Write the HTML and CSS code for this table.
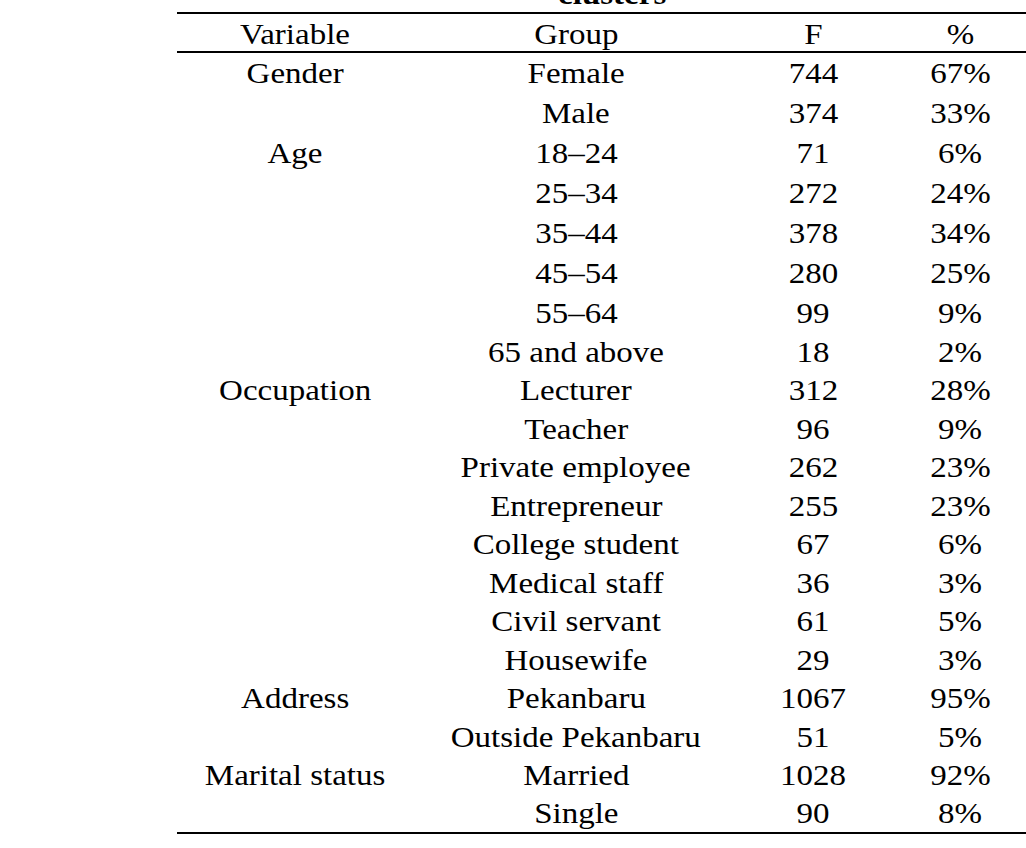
FILE: index.html
```html
<!DOCTYPE html>
<html lang="en">
<head>
<meta charset="utf-8">
<title>Demographics</title>
<link rel="stylesheet" href="styles.css">
</head>
<body>
<div class="page">
  <div class="caption"><span>clusters</span></div>
  <table class="demog">
    <colgroup>
      <col class="c-var"><col class="c-grp"><col class="c-f"><col class="c-pct">
    </colgroup>
    <thead>
      <tr><th><span>Variable</span></th><th><span>Group</span></th><th><span>F</span></th><th><span>%</span></th></tr>
    </thead>
    <tbody>
      <tr class="tall"><td><span>Gender</span></td><td><span>Female</span></td><td><span>744</span></td><td><span>67%</span></td></tr>
      <tr class="tall"><td></td><td><span>Male</span></td><td><span>374</span></td><td><span>33%</span></td></tr>
      <tr class="tall"><td><span>Age</span></td><td><span>18–24</span></td><td><span>71</span></td><td><span>6%</span></td></tr>
      <tr class="tall"><td></td><td><span>25–34</span></td><td><span>272</span></td><td><span>24%</span></td></tr>
      <tr class="tall"><td></td><td><span>35–44</span></td><td><span>378</span></td><td><span>34%</span></td></tr>
      <tr class="tall"><td></td><td><span>45–54</span></td><td><span>280</span></td><td><span>25%</span></td></tr>
      <tr class="tall"><td></td><td><span>55–64</span></td><td><span>99</span></td><td><span>9%</span></td></tr>
      <tr><td></td><td><span>65 and above</span></td><td><span>18</span></td><td><span>2%</span></td></tr>
      <tr><td><span>Occupation</span></td><td><span>Lecturer</span></td><td><span>312</span></td><td><span>28%</span></td></tr>
      <tr><td></td><td><span>Teacher</span></td><td><span>96</span></td><td><span>9%</span></td></tr>
      <tr><td></td><td><span>Private employee</span></td><td><span>262</span></td><td><span>23%</span></td></tr>
      <tr><td></td><td><span>Entrepreneur</span></td><td><span>255</span></td><td><span>23%</span></td></tr>
      <tr><td></td><td><span>College student</span></td><td><span>67</span></td><td><span>6%</span></td></tr>
      <tr><td></td><td><span>Medical staff</span></td><td><span>36</span></td><td><span>3%</span></td></tr>
      <tr><td></td><td><span>Civil servant</span></td><td><span>61</span></td><td><span>5%</span></td></tr>
      <tr><td></td><td><span>Housewife</span></td><td><span>29</span></td><td><span>3%</span></td></tr>
      <tr><td><span>Address</span></td><td><span>Pekanbaru</span></td><td><span>1067</span></td><td><span>95%</span></td></tr>
      <tr><td></td><td><span>Outside Pekanbaru</span></td><td><span>51</span></td><td><span>5%</span></td></tr>
      <tr><td><span>Marital status</span></td><td><span>Married</span></td><td><span>1028</span></td><td><span>92%</span></td></tr>
      <tr><td></td><td><span>Single</span></td><td><span>90</span></td><td><span>8%</span></td></tr>
    </tbody>
  </table>
</div>
</body>
</html>
```
FILE: styles.css
```css
html, body {
  margin: 0;
  padding: 0;
  background: #fff;
  overflow: hidden;
}

body {
  font-family: "Liberation Serif", "Times New Roman", serif;
  font-size: 30px;
  color: #000;
}

.page {
  padding-left: 177px;
}

.caption {
  width: 856px;
  text-align: center;
  font-weight: bold;
  line-height: 30px;
  margin-top: -21px;
  margin-bottom: 3px;
}

.caption span {
  display: inline-block;
  transform: scaleX(1.1);
  margin-left: 14px;
}

.demog {
  width: 856px;
  border-collapse: collapse;
  border-top: 2px solid #000;
  border-bottom: 2px solid #000;
  table-layout: fixed;
}

.c-var { width: 236px; }
.c-grp { width: 326px; }
.c-f { width: 148px; }
.c-pct { width: 146px; }

.demog th,
.demog td {
  padding: 0;
  text-align: center;
  font-weight: normal;
  white-space: nowrap;
}

.demog th {
  padding-top: 3px;
  line-height: 34px;
}

.demog tbody {
  border-top: 2px solid #000;
}

.demog tbody tr {
  height: 38.5px;
}

.demog tbody tr.tall {
  height: 40px;
}

.demog td {
  line-height: 33px;
  vertical-align: middle;
}

.demog th > span,
.demog td > span {
  display: inline-block;
  transform: scaleX(1.1);
}
```
